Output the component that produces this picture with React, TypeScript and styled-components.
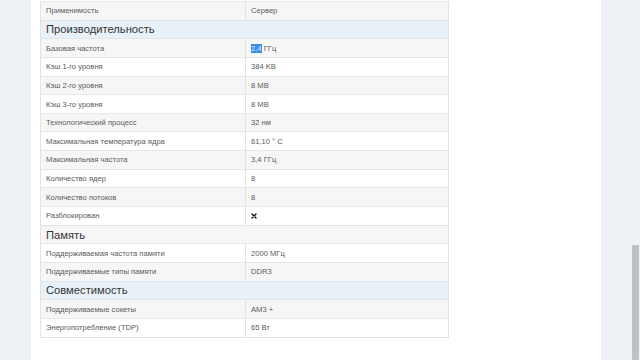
import styled, { createGlobalStyle } from 'styled-components';

const GlobalStyle = createGlobalStyle`
  html, body {
    margin: 0;
    padding: 0;
    background: #eef1f5;
    overflow: hidden;
  }
  body {
    font-family: 'Liberation Sans', Arial, sans-serif;
  }
`;

interface ISpecRow {
  kind: 'row' | 'group';
  label: string;
  value?: React.ReactNode;
}

const Page = styled.div`
  display: flex;
  width: 640px;
  height: 360px;
`;

const Gutter = styled.div`
  width: 31px;
  flex: none;
  background: #eef1f5;
`;

const Panel = styled.div`
  width: 570px;
  flex: none;
  background: #ffffff;
  padding: 1px 0 0 9px;
  box-sizing: border-box;
`;

const RightSide = styled.div`
  flex: 1;
  display: flex;
  justify-content: flex-end;
  background: #eef1f5;
  padding-top: 245px;
  box-sizing: border-box;
`;

const ScrollThumb = styled.div`
  width: 7px;
  height: 115px;
  margin-right: 1px;
  background: #c1c1c1;
  border-radius: 1px;
`;

const Table = styled.table`
  width: 409px;
  border-collapse: collapse;
  border: 1px solid #e3e3e3;
  table-layout: fixed;

  tr:nth-child(odd) td {
    background: #f6f6f6;
  }
`;

const Row = styled.tr`
  height: 18.65px;
`;

const Cell = styled.td<{ $first?: boolean }>`
  width: ${(p) => (p.$first ? '194px' : 'auto')};
  padding: 0 5px;
  font-size: 7.6px;
  color: #5a5a5a;
  border-top: 1px solid #e6e6e6;
  border-right: ${(p) => (p.$first ? '1px solid #e3e3e3' : 'none')};
  white-space: nowrap;
  vertical-align: middle;
`;

const GroupCell = styled.td`
  && {
    background: #e9f1f8;
  }
  padding: 0 5px;
  font-size: 11.2px;
  color: #333;
  border-top: 1px solid #e0e6ec;
  white-space: nowrap;
  vertical-align: middle;
`;

const Selected = styled.span`
  background: #3a8ee6;
  color: #dfeaf7;
`;

const Cross = () => (
  <svg width="6" height="6" viewBox="0 0 6 6" style={{ verticalAlign: 'middle' }}>
    <path d="M1 1 L5 5 M5 1 L1 5" stroke="#111" strokeWidth="1.4" strokeLinecap="round" />
  </svg>
);

const ROWS: ISpecRow[] = [
  { kind: 'row', label: 'Применимость', value: 'Сервер' },
  { kind: 'group', label: 'Производительность' },
  {
    kind: 'row',
    label: 'Базовая частота',
    value: (
      <>
        <Selected>2,4</Selected> ГГц
      </>
    ),
  },
  { kind: 'row', label: 'Кэш 1-го уровня', value: '384 KB' },
  { kind: 'row', label: 'Кэш 2-го уровня', value: '8 MB' },
  { kind: 'row', label: 'Кэш 3-го уровня', value: '8 MB' },
  { kind: 'row', label: 'Технологический процесс', value: '32 нм' },
  { kind: 'row', label: 'Максимальная температура ядра', value: '61,10 ° C' },
  { kind: 'row', label: 'Максимальная частота', value: '3,4 ГГц' },
  { kind: 'row', label: 'Количество ядер', value: '8' },
  { kind: 'row', label: 'Количество потоков', value: '8' },
  { kind: 'row', label: 'Разблокирован', value: <Cross /> },
  { kind: 'group', label: 'Память' },
  { kind: 'row', label: 'Поддерживаемая частота памяти', value: '2000 МГц' },
  { kind: 'row', label: 'Поддерживаемые типы памяти', value: 'DDR3' },
  { kind: 'group', label: 'Совместимость' },
  { kind: 'row', label: 'Поддерживаемые сокеты', value: 'AM3 +' },
  { kind: 'row', label: 'Энергопотребление (TDP)', value: '65 Вт' },
];

const App: React.FC = () => {
  return (
    <>
      <GlobalStyle />
      <Page>
        <Gutter />
        <Panel>
          <Table>
            <tbody>
              {ROWS.map((row, index) =>
                row.kind === 'group' ? (
                  <Row key={index}>
                    <GroupCell colSpan={2}>{row.label}</GroupCell>
                  </Row>
                ) : (
                  <Row key={index}>
                    <Cell $first>{row.label}</Cell>
                    <Cell>{row.value}</Cell>
                  </Row>
                )
              )}
            </tbody>
          </Table>
        </Panel>
        <RightSide>
          <ScrollThumb />
        </RightSide>
      </Page>
    </>
  );
};

export default App;
